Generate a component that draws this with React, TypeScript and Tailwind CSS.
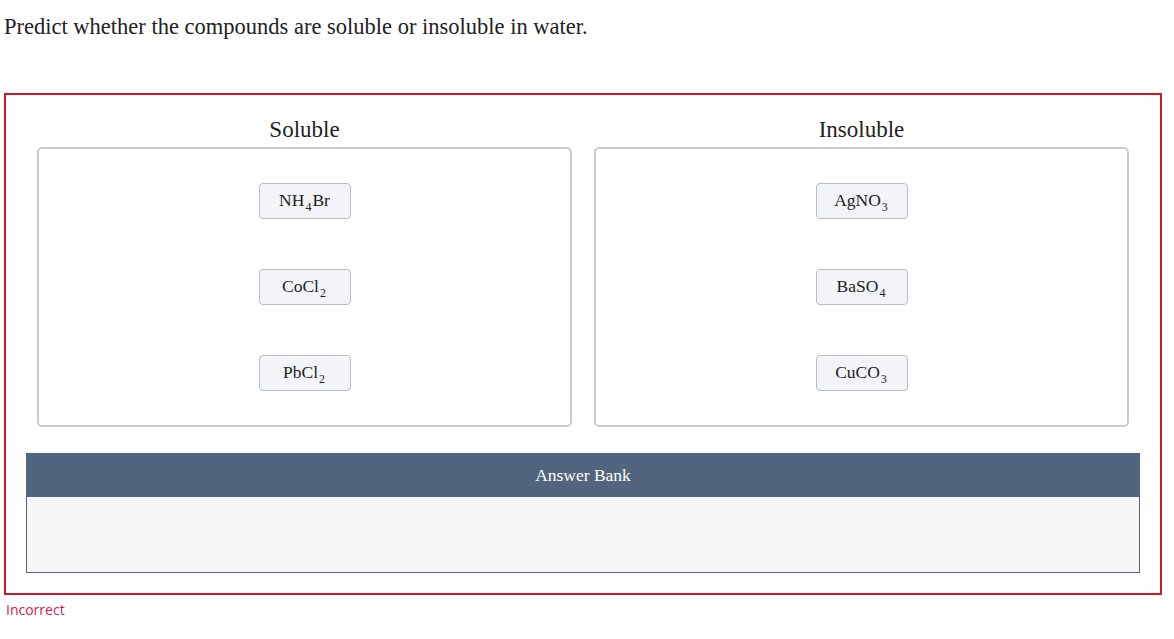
import React from "react";

const serif = { fontFamily: '"Liberation Serif", "Times New Roman", serif' };

function Chip({ children }: { children: React.ReactNode }) {
  return (
    <div className="w-[92px] h-[36px] flex items-center justify-center border border-[#b9bcc2] rounded-[4px] bg-[#f3f4f7] text-[17.5px] text-[#222] leading-none">
      <span>{children}</span>
    </div>
  );
}

function Sub({ children }: { children: React.ReactNode }) {
  return <sub className="text-[12px] relative -bottom-[5px] align-baseline px-[1px]">{children}</sub>;
}

function Column({ title, items }: { title: string; items: React.ReactNode[] }) {
  return (
    <div className="flex flex-col">
      <div className="h-[30px] leading-[34px] text-center text-[23px] text-[#222]">{title}</div>
      <div className="mt-[4px] h-[280px] border-2 border-[#cbcbcb] rounded-[5px] flex flex-col items-center pt-[34px] gap-[50px]">
        {items.map((it, i) => (
          <Chip key={i}>{it}</Chip>
        ))}
      </div>
    </div>
  );
}

export default function App() {
  return (
    <div className="w-[1174px] h-[639px] bg-white" style={serif}>
      <div className="pt-[13px] pl-[4px] text-[22.5px] leading-[28px] text-[#222]">
        Predict whether the compounds are soluble or insoluble in water.
      </div>
      <div className="ml-[4px] mt-[52px] w-[1158px] border-2 border-[#cc1b24] pt-[18px] pb-[20px] px-[20px]">
        <div className="grid grid-cols-2 gap-[22px] px-[11px]">
          <Column
            title="Soluble"
            items={[
              <>NH<Sub>4</Sub>Br</>,
              <>CoCl<Sub>2</Sub></>,
              <>PbCl<Sub>2</Sub></>,
            ]}
          />
          <Column
            title="Insoluble"
            items={[
              <>AgNO<Sub>3</Sub></>,
              <>BaSO<Sub>4</Sub></>,
              <>CuCO<Sub>3</Sub></>,
            ]}
          />
        </div>
        <div className="mt-[26px]">
          <div className="h-[44px] bg-[#51667e] flex items-center justify-center text-white text-[17.5px]">
            Answer Bank
          </div>
          <div className="h-[76px] bg-[#f7f7f7] border border-t-0 border-[#51667e]"></div>
        </div>
      </div>
      <div
        className="pl-[6px] pt-[6px] text-[14px] leading-[18px] text-[#d4195a]"
        style={{ fontFamily: '"Open Sans", "Noto Sans", sans-serif' }}
      >
        Incorrect
      </div>
    </div>
  );
}
